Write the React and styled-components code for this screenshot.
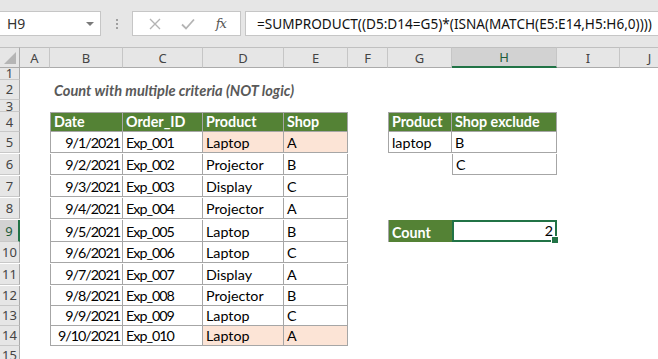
import React from "react";
import styled, { createGlobalStyle } from "styled-components";

const GlobalStyle = createGlobalStyle`
	html, body {
		margin: 0;
		padding: 0;
		background: #ffffff;
		overflow: hidden;
	}
`

const COLS = "20px 30px 73px 80px 81px 64px 40px 64px 105px 63px 60px";
const GREEN = "#548235";
const PINK = "#fce4d6";
const LINE = "#a6a6a6";

const Page = styled.div`
	width: 658px;
	height: 359px;
	overflow: hidden;
	display: flex;
	flex-direction: column;
	font-family: "Lato", "Liberation Sans", sans-serif;
	& > * {
		flex-shrink: 0;
	}
`

const Toolbar = styled.div`
	height: 47px;
	box-sizing: border-box;
	padding-top: 11px;
	background: #e6e6e6;
	display: flex;
	align-items: flex-start;
`

const NameBox = styled.div`
	width: 101px;
	height: 25px;
	box-sizing: border-box;
	background: #fff;
	border: 1px solid #c6c6c6;
	border-left: none;
	display: flex;
	align-items: center;
	justify-content: space-between;
	padding: 0 6px 0 7px;
	font-family: "Noto Sans", sans-serif;
	font-size: 14px;
	color: #333;
`

const Caret = styled.span`
	width: 0;
	height: 0;
	border-left: 4px solid transparent;
	border-right: 4px solid transparent;
	border-top: 4px solid #7a7a7a;
`

const Dots = styled.div`
	width: 31px;
	height: 25px;
	display: flex;
	flex-direction: column;
	align-items: center;
	justify-content: center;
	gap: 2px;
	span {
		width: 2px;
		height: 2px;
		background: #a0a0a0;
	}
`

const FxBox = styled.div`
	width: 109px;
	height: 25px;
	box-sizing: border-box;
	background: #fff;
	border: 1px solid #c6c6c6;
	display: flex;
	align-items: center;
	justify-content: space-around;
	padding: 0 4px 0 6px;
`

const Fx = styled.span`
	font-family: "DejaVu Serif", serif;
	font-style: italic;
	font-size: 13px;
	color: #555;
	letter-spacing: -1px;
`

const FormulaInput = styled.div`
	flex: 1;
	margin-left: 4px;
	height: 25px;
	box-sizing: border-box;
	background: #fff;
	border: 1px solid #c6c6c6;
	border-right: none;
	display: flex;
	align-items: center;
	padding-left: 11px;
	font-family: "Noto Sans", sans-serif;
	font-size: 13.6px;
	color: #111;
	white-space: nowrap;
`

const Row = styled.div`
	display: grid;
	grid-template-columns: ${COLS};
	height: ${p => p.$h}px;
`

const ColHead = styled.div`
	background: ${p => p.$active ? "#d2d2d2" : "#e6e6e6"};
	border-top: 1px solid #c0c0c0;
	border-right: 1px solid #c6c6c6;
	border-bottom: ${p => p.$active ? "2px solid #217346" : "1px solid #ababab"};
	box-sizing: border-box;
	display: flex;
	align-items: center;
	justify-content: center;
	font-family: "Noto Sans", sans-serif;
	font-size: 13px;
	color: ${p => p.$active ? "#1e5d3a" : "#444"};
`

const Corner = styled(ColHead)`
	position: relative;
	border-right: 1px solid #ababab;
	&::after {
		content: "";
		position: absolute;
		right: 3px;
		bottom: 3px;
		border-left: 12px solid transparent;
		border-bottom: 12px solid #b5b5b5;
	}
`

const RowHead = styled.div`
	background: ${p => p.$active ? "#d2d2d2" : "#e6e6e6"};
	border-right: ${p => p.$active ? "2px solid #217346" : "1px solid #ababab"};
	border-bottom: 1px solid #c8c8c8;
	box-sizing: border-box;
	display: flex;
	align-items: center;
	justify-content: center;
	overflow: hidden;
	font-family: "Noto Sans", sans-serif;
	font-size: 13px;
	color: ${p => p.$active ? "#1e5d3a" : "#444"};
`

const Cell = styled.div`
	position: relative;
	box-sizing: border-box;
	display: flex;
	align-items: flex-end;
	justify-content: ${p => p.$right ? "flex-end" : "flex-start"};
	padding: 0 2px 0 3px;
	white-space: nowrap;
	font-size: 14.3px;
	line-height: 18px;
	letter-spacing: ${p => p.$num ? "-1px" : "0"};
	color: ${p => p.$head ? "#fff" : "#000"};
	font-weight: ${p => p.$head ? 700 : 400};
	background: ${p => p.$head ? GREEN : p.$pink ? PINK : "transparent"};
	border-right: ${p => p.$box ? `1px solid ${LINE}` : "none"};
	border-bottom: ${p => p.$box ? `1px solid ${LINE}` : "none"};
	border-left: ${p => p.$left ? `1px solid ${LINE}` : "none"};
	border-top: ${p => p.$top ? `1px solid ${LINE}` : "none"};
`

const Title = styled(Cell)`
	overflow: visible;
	font-size: 14.6px;
	font-weight: 700;
	font-style: italic;
	color: #595959;
	padding-left: 4px;
`

const Selected = styled(Cell)`
	border: 2px solid #217346;
	padding-right: 2px;
	&::after {
		content: "";
		position: absolute;
		right: -4px;
		bottom: -4px;
		width: 6px;
		height: 6px;
		background: #217346;
		border: 1px solid #fff;
	}
`

const letters = ["A", "B", "C", "D", "E", "F", "G", "H", "I", "J"];

const data = [
	["9/1/2021", "Exp_001", "Laptop", "A"],
	["9/2/2021", "Exp_002", "Projector", "B"],
	["9/3/2021", "Exp_003", "Display", "C"],
	["9/4/2021", "Exp_004", "Projector", "A"],
	["9/5/2021", "Exp_005", "Laptop", "B"],
	["9/6/2021", "Exp_006", "Laptop", "C"],
	["9/7/2021", "Exp_007", "Display", "A"],
	["9/8/2021", "Exp_008", "Projector", "B"],
	["9/9/2021", "Exp_009", "Laptop", "C"],
	["9/10/2021", "Exp_010", "Laptop", "A"],
];

const heights = { 1: 13, 2: 20, 3: 12, 4: 20, 5: 22, 6: 22, 7: 22, 8: 22, 9: 22, 10: 22, 11: 22, 12: 20, 13: 20, 14: 20, 15: 20 };

const XIcon = () => (
	<svg width="12" height="12" viewBox="0 0 12 12">
		<path d="M1 1L11 11M11 1L1 11" stroke="#b4b4b4" strokeWidth="1.4" fill="none" />
	</svg>
)

const CheckIcon = () => (
	<svg width="14" height="12" viewBox="0 0 14 12">
		<path d="M1 6.5L5 10.5L13 1.5" stroke="#b4b4b4" strokeWidth="1.8" fill="none" />
	</svg>
)

const renderRow = (r) => {
	const cells = [];
	for (let c = 0; c < 10; c++) {
		const key = letters[c];
		let cell = <Cell key={key} />;
		const d = r >= 5 && r <= 14 ? data[r - 5] : null;
		if (r === 2 && c === 1) {
			cell = <Title key={key}>Count with multiple criteria (NOT logic)</Title>;
		} else if (r === 4 && c >= 1 && c <= 4) {
			cell = <Cell key={key} $head $box $top $left={c === 1}>{["Date", "Order_ID", "Product", "Shop"][c - 1]}</Cell>;
		} else if (d && c >= 1 && c <= 4) {
			const pink = (r === 5 || r === 14) && c >= 3;
			cell = <Cell key={key} $box $left={c === 1} $right={c === 1} $num={c <= 2} $pink={pink}>{d[c - 1]}</Cell>;
		} else if (r === 4 && c === 6) {
			cell = <Cell key={key} $head $box $top $left>Product</Cell>;
		} else if (r === 4 && c === 7) {
			cell = <Cell key={key} $head $box $top>Shop exclude</Cell>;
		} else if (r === 5 && c === 6) {
			cell = <Cell key={key} $box $left>laptop</Cell>;
		} else if (r === 5 && c === 7) {
			cell = <Cell key={key} $box>B</Cell>;
		} else if (r === 6 && c === 7) {
			cell = <Cell key={key} $box $left>C</Cell>;
		} else if (r === 9 && c === 6) {
			cell = <Cell key={key} $head $left>Count</Cell>;
		} else if (r === 9 && c === 7) {
			cell = <Selected key={key} $right>2</Selected>;
		}
		cells.push(cell);
	}
	return (
		<Row key={r} $h={heights[r]}>
			<RowHead $active={r === 9}>{r}</RowHead>
			{cells}
			<Cell />
		</Row>
	)
}

const App = () => {
	const rows = [];
	for (let r = 1; r <= 15; r++) rows.push(renderRow(r));
	return (
		<Page>
			<GlobalStyle />
			<Toolbar>
				<NameBox>H9<Caret /></NameBox>
				<Dots><span /><span /><span /></Dots>
				<FxBox>
					<XIcon />
					<CheckIcon />
					<Fx>fx</Fx>
				</FxBox>
				<FormulaInput>=SUMPRODUCT((D5:D14=G5)*(ISNA(MATCH(E5:E14,H5:H6,0))))</FormulaInput>
			</Toolbar>
			<Row $h={20}>
				<Corner />
				{letters.map(l => <ColHead key={l} $active={l === "H"}>{l}</ColHead>)}
				<ColHead />
			</Row>
			{rows}
		</Page>
	)
}

export default App
